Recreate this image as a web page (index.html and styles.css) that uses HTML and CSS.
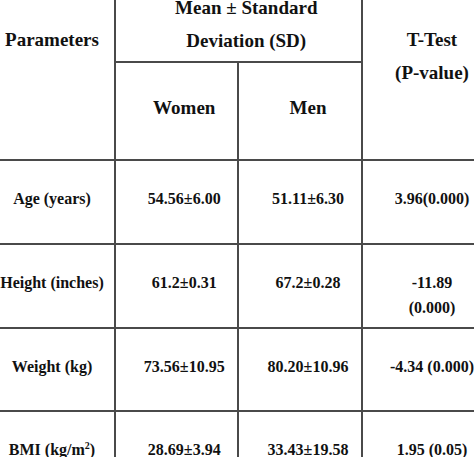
FILE: index.html
```html
<!DOCTYPE html>
<html lang="en">
<head>
<meta charset="utf-8">
<title>Mean ± SD table</title>
<link rel="stylesheet" href="styles.css">
</head>
<body>
<table class="stats">
  <colgroup>
    <col class="c-param">
    <col class="c-women">
    <col class="c-men">
    <col class="c-test">
  </colgroup>
  <thead>
    <tr class="h1">
      <th rowspan="2" class="param-head">Parameters</th>
      <th colspan="2" class="mean-head">Mean ± Standard<br>Deviation (SD)</th>
      <th rowspan="2" class="test-head">T-Test<br>(P-value)</th>
    </tr>
    <tr class="h2">
      <th class="sex">Women</th>
      <th class="sex">Men</th>
    </tr>
  </thead>
  <tbody>
    <tr class="r1">
      <td>Age (years)</td>
      <td>54.56±6.00</td>
      <td>51.11±6.30</td>
      <td>3.96(0.000)</td>
    </tr>
    <tr class="r2">
      <td>Height (inches)</td>
      <td>61.2±0.31</td>
      <td>67.2±0.28</td>
      <td>-11.89<br>(0.000)</td>
    </tr>
    <tr class="r3">
      <td>Weight (kg)</td>
      <td>73.56±10.95</td>
      <td>80.20±10.96</td>
      <td>-4.34 (0.000)</td>
    </tr>
    <tr class="r4">
      <td>BMI (kg/m<sup class="sq">2</sup>)</td>
      <td>28.69±3.94</td>
      <td>33.43±19.58</td>
      <td>1.95 (0.05)</td>
    </tr>
  </tbody>
</table>
</body>
</html>
```

FILE: styles.css
```css
html, body {
  margin: 0;
  padding: 0;
  overflow: hidden;
  background: #ffffff;
}

body {
  width: 474px;
  height: 457px;
  font-family: "Liberation Serif", "Times New Roman", serif;
  color: #111111;
}

.stats {
  border-collapse: collapse;
  table-layout: fixed;
  width: 512.5px;
  margin-left: -27.5px;
  margin-top: -13px;
  border: none;
}

.c-param { width: 141px; }
.c-women { width: 123.5px; }
.c-men { width: 124px; }
.c-test { width: 124px; }

.stats th,
.stats td {
  border: 2px solid #4a4a4a;
  text-align: center;
  vertical-align: top;
  font-weight: bold;
  padding: 0 0 0 16px;
  white-space: nowrap;
}

.stats th {
  font-size: 19px;
  line-height: 33px;
}

.stats td {
  font-size: 16px;
  line-height: 25px;
  padding-top: 25px;
}

.h1 { height: 73.5px; }
.h2 { height: 98.5px; }
.r1 { height: 84px; }
.r2 { height: 83.5px; }
.r3 { height: 83.5px; }
.r4 { height: 90px; }

.stats th.mean-head { padding-top: 2px; }
.stats th.param-head,
.stats th.test-head { padding-top: 34.4px; }
.stats th.sex { padding-top: 28px; }

.sq {
  font-size: 10px;
  line-height: 0;
  vertical-align: 6px;
}
```
